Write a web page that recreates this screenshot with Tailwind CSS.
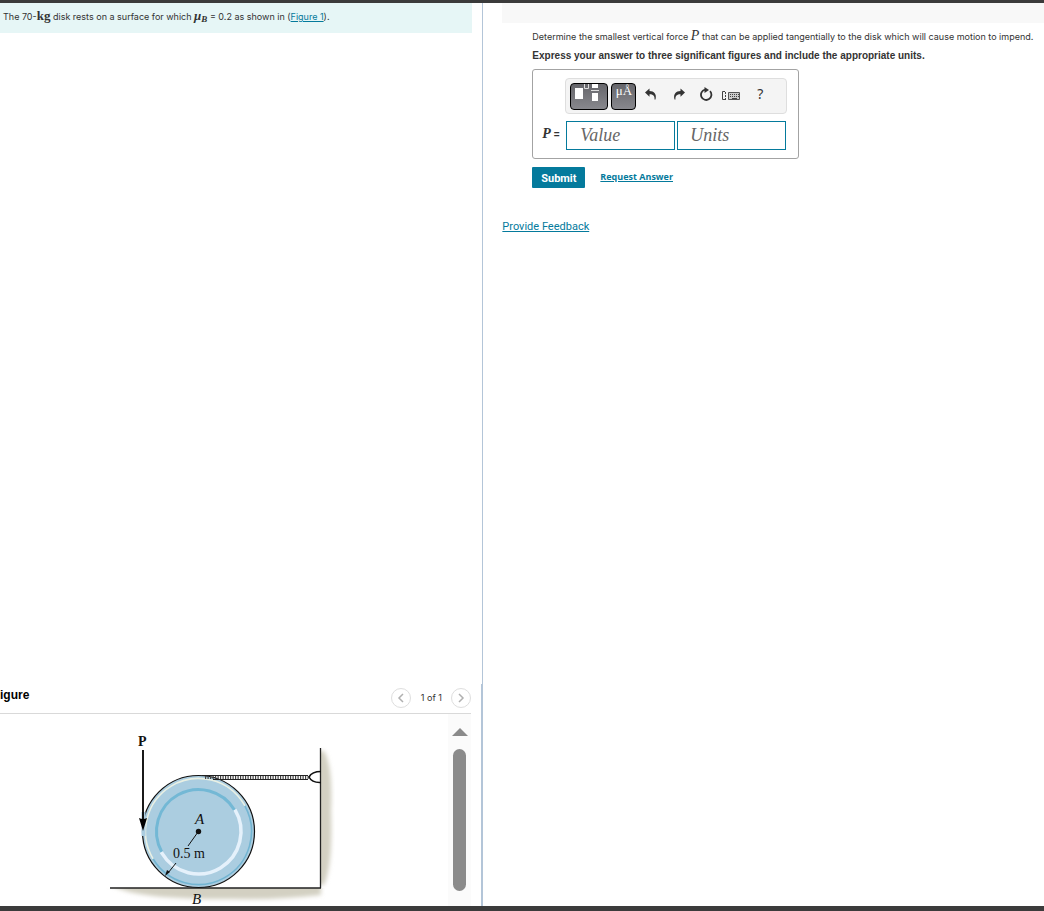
<!DOCTYPE html>
<html lang="en">

<head>
    <meta charset="UTF-8">
    <meta name="viewport" content="width=device-width, initial-scale=1.0">
    <title>Disk friction problem</title>
    <script src="https://cdn.jsdelivr.net/npm/@tailwindcss/browser@4"></script>
</head>

<body class="bg-white font-['Liberation_Sans',Arial,sans-serif] text-[#333]">
    <div class="flex h-screen flex-col border-t-3 border-b-5 border-[#3b3b3b]">
        <main class="flex min-h-0 flex-1">
            <!-- Left: problem text and figure -->
            <section class="flex w-[46.3%] shrink-0 flex-col justify-between">
                <div class="flex flex-1 border-r border-[#b3c5d8]">
                    <p class="mr-2.5 h-[30px] flex-1 bg-[#e6f6f6] pl-[3px] font-[Inter,sans-serif] text-[9px] leading-7 whitespace-nowrap">
                        The 70-<span class="font-['Liberation_Serif',serif] text-[13px] leading-none font-bold">kg</span>
                        disk rests on a surface for which
                        <span class="font-['Liberation_Serif',serif] text-[13px] leading-none font-bold italic">μ<sub class="text-[9px] leading-none">B</sub></span>
                        = 0.2 as shown in (<a href="#figure" class="text-[#047a9c] underline">Figure 1</a>).
                    </p>
                </div>

                <div id="figure" class="flex h-[222px] flex-col border-r-2 border-[#b3c5d8] pr-2.5">
                    <div class="flex h-[30px] items-center justify-between border-b border-[#d9d9d9]">
                        <h2 class="pb-2 text-xs font-bold text-black">igure</h2>
                        <div class="flex items-center gap-2 pb-0.5 font-[Inter,sans-serif] text-[9px]">
                            <button aria-label="Previous figure" class="flex size-5 items-center justify-center rounded-full border border-[#dedede]">
                                <svg class="size-2.5" viewBox="0 0 10 10" fill="none" stroke="#b0b0b0" stroke-width="1.5"><path d="M7 1 3 5l4 4" /></svg>
                            </button>
                            <span class="min-w-6 text-center">1 of 1</span>
                            <button aria-label="Next figure" class="flex size-5 items-center justify-center rounded-full border border-[#dedede]">
                                <svg class="size-2.5" viewBox="0 0 10 10" fill="none" stroke="#b0b0b0" stroke-width="1.5"><path d="m3 1 4 4-4 4" /></svg>
                            </button>
                        </div>
                    </div>
                    <div class="flex flex-1 justify-between">
                        <svg class="ml-[100px] h-48 w-[250px]" viewBox="100 714 250 192" font-family="'Liberation Serif',serif" fill="#111">
                            <defs>
                                <filter id="soft" x="-20%" y="-20%" width="140%" height="140%"><feGaussianBlur stdDeviation="2" /></filter>
                                <clipPath id="below"><path d="M100 888h250v18H100z" /></clipPath>
                                <clipPath id="beside"><path d="M321 740h29v160h-29z" /></clipPath>
                            </defs>
                            <!-- ground and wall -->
                            <path d="M112 884h209v11q-40 5-90 4-98 1-122-15z" fill="#d3d0c2" filter="url(#soft)" clip-path="url(#below)" />
                            <path d="M315 751h9q9 15 7 60 2 55-7 74h-9z" fill="#d3d0c2" filter="url(#soft)" clip-path="url(#beside)" />
                            <path d="M110 888h211M320.500 748v140" fill="none" stroke="#222" stroke-width="1.300" />
                            <!-- disk -->
                            <circle cx="198.500" cy="831.500" r="56" fill="#abcde0" stroke="#111" stroke-width="1.200" />
                            <g fill="none">
                                <circle cx="198.500" cy="831.500" r="53" stroke="#73b5d2" stroke-width="1.600" pathLength="360" stroke-dasharray="178 182" transform="rotate(-29 198.500 831.500)" />
                                <circle cx="198.500" cy="831.500" r="53" stroke="#e9f0e4" stroke-width="1.600" pathLength="360" stroke-dasharray="182 178" transform="rotate(149 198.500 831.500)" />
                                <circle cx="198.500" cy="831.500" r="42" stroke="#73b8d5" stroke-width="3" pathLength="360" stroke-dasharray="178 182" transform="rotate(151 198.500 831.500)" />
                                <circle cx="198.500" cy="831.500" r="42.500" stroke="#e5f1fb" stroke-width="3.500" pathLength="360" stroke-dasharray="182 178" transform="rotate(-31 198.500 831.500)" />
                            </g>
                            <!-- rope and hook -->
                            <path d="M202 775.500h106M213 779.500h95" fill="none" stroke="#222" stroke-width="1" />
                            <path d="M205 777.500h104" fill="none" stroke="#444" stroke-width="3" stroke-dasharray="1.200 1.300" />
                            <path d="M321 771.500q-9 0-12 5.500 3 6 12 5.500" fill="none" stroke="#111" stroke-width="1.600" />
                            <!-- force -->
                            <path d="M143.500 812v24" stroke="#abcde0" stroke-width="4" />
                            <path d="M143 750v72" stroke="#000" stroke-width="1.800" />
                            <path d="M139 818q4 2 8 0l-4 13z" fill="#000" />
                            <!-- radius -->
                            <path d="m198 832-10 14m-12 17-8 10" stroke="#111" stroke-width="1" />
                            <path d="m165 876 2-6 3 2z" />
                            <circle cx="198.500" cy="831.500" r="2.700" />
                            <text x="138" y="746" font-size="14" font-weight="bold">P</text>
                            <text x="195" y="824" font-size="15" font-style="italic">A</text>
                            <text x="173" y="858" font-size="14">0.5 m</text>
                            <text x="192" y="904" font-size="15" font-style="italic">B</text>
                        </svg>
                        <div class="flex w-[23px] flex-col items-center bg-[#fbfbfb] pt-3.5 pb-[15px]">
                            <svg class="mb-[13px] h-2 w-4 shrink-0" viewBox="0 0 16 8"><path d="m8 0 8 8H0z" fill="#8b8b8b" /></svg>
                            <div class="w-[13px] flex-1 rounded-full bg-[#8b8b8b]"></div>
                        </div>
                    </div>
                </div>
            </section>

            <!-- Right: answer part -->
            <section class="min-w-0 flex-1 pl-[19px]">
                <div class="h-5 bg-[#f8f8f8]"></div>
                <div class="pl-[30px]">
                    <p class="mt-1 font-[Inter,sans-serif] text-[9px] leading-5 whitespace-nowrap">Determine the smallest vertical force
                        <i class="font-['Liberation_Serif',serif] text-sm leading-none">P</i>
                        that can be applied tangentially to the disk which will cause motion to impend.</p>
                    <p class="text-[10px] leading-[18px] font-bold">Express your answer to three significant figures and include the appropriate units.</p>

                    <form>
                        <div class="mt-1 h-[90px] w-[267px] rounded-[3px] border border-[#a3a3a3] pt-2 pr-[11px]">
                            <div class="ml-8 flex h-9 items-center rounded border border-[#dedede] bg-[#f4f4f4] px-1">
                                <button type="button" aria-label="Templates" class="h-[27px] w-[38px] rounded border border-black bg-linear-to-b from-[#66666b] to-[#88888d]">
                                    <svg class="size-full" viewBox="0 0 36 25" fill="#fff">
                                        <path d="M4 4h8v11H4zM21 0h6v4h-6zM21 9h6v8h-6z" />
                                        <path d="M20 6.500h8" stroke="#ddd" />
                                        <path d="M13.500 0v4.500h4V0" fill="none" stroke="#ddd" />
                                    </svg>
                                </button>
                                <button type="button" aria-label="Units" class="ml-[3px] flex h-[27px] w-[25px] justify-center rounded border border-black bg-linear-to-b from-[#66666b] to-[#88888d] font-['Liberation_Serif',serif] text-[13px] leading-3.5 text-white">μÅ</button>
                                <div class="flex items-center pb-1">
                                    <button type="button" aria-label="Undo" class="ml-[9px]">
                                        <svg class="h-3 w-3" viewBox="0 0 12 12" fill="#333"><path d="M0 4.500 4.500.500V3c4.500 0 7.500 3 6 8.500h-1C10 8 8 6.300 4.500 6.300v2.500z" /></svg>
                                    </button>
                                    <button type="button" aria-label="Redo" class="ml-4">
                                        <svg class="h-3 w-3" viewBox="0 0 12 12" fill="#333"><path d="M12 4.500 7.500.500V3C3 3 0 6 1.500 11.500h1C2 8 4 6.300 7.500 6.300v2.500z" /></svg>
                                    </button>
                                    <button type="button" aria-label="Reset" class="ml-3.5">
                                        <svg class="h-3.5 w-3.5" viewBox="0 0 14 14" fill="none" stroke="#333" stroke-width="1.800"><path d="M11 4.200A5.200 5.200 0 1 1 6 2.700" /><path d="m5.500 0 4.500 3-4.500 3z" fill="#333" stroke="none" /></svg>
                                    </button>
                                    <button type="button" aria-label="Keyboard" class="mt-1 ml-[9px]">
                                        <svg class="h-2.5 w-[19px]" viewBox="0 0 19 10" fill="none" stroke="#444">
                                            <path d="M3 .500H.5v8H3M3.500 1v2M3.500 4v2M3.500 7v2" />
                                            <path d="M6.500 1.500h11v7h-11z" fill="#ccc" stroke="#555" />
                                            <path d="M8 3.500h9M8 5.500h9" stroke-dasharray="1 1" /><path d="M10 7.500h5" />
                                        </svg>
                                    </button>
                                    <button type="button" aria-label="Help" class="ml-4 font-['Noto_Sans',sans-serif] text-sm">?</button>
                                </div>
                            </div>
                            <div class="mt-[7px] flex items-center">
                                <label for="value" class="w-[33px] pb-1 pl-[9px] text-[10px] font-bold whitespace-nowrap"><i class="font-['Liberation_Serif',serif] text-sm">P</i> =</label>
                                <input id="value" type="text" placeholder="Value" class="h-[29px] w-[109px] border border-[#047a9c] pl-[13px] font-['Liberation_Serif',serif] text-lg italic placeholder:text-[#666]">
                                <input id="units" type="text" placeholder="Units" aria-label="Units" class="ml-0.5 h-[29px] w-[109px] border border-[#047a9c] pl-3 font-['Liberation_Serif',serif] text-lg italic placeholder:text-[#666]">
                            </div>
                        </div>
                        <div class="mt-2 flex items-center">
                            <button type="submit" class="h-[21px] w-[53px] rounded-[1px] bg-[#047a9c] pt-0.5 font-[Roboto,sans-serif] text-[11px] leading-4 font-bold text-white">Submit</button>
                            <a href="#" class="ml-[15px] pb-0.5 font-['Open_Sans',sans-serif] text-[9px] font-bold text-[#047a9c] underline">Request Answer</a>
                        </div>
                    </form>
                </div>
                <a href="#" class="mt-[31px] inline-block font-[Roboto,sans-serif] text-[11px] leading-4 text-[#047a9c] underline">Provide Feedback</a>
            </section>
        </main>
    </div>
</body>

</html>
